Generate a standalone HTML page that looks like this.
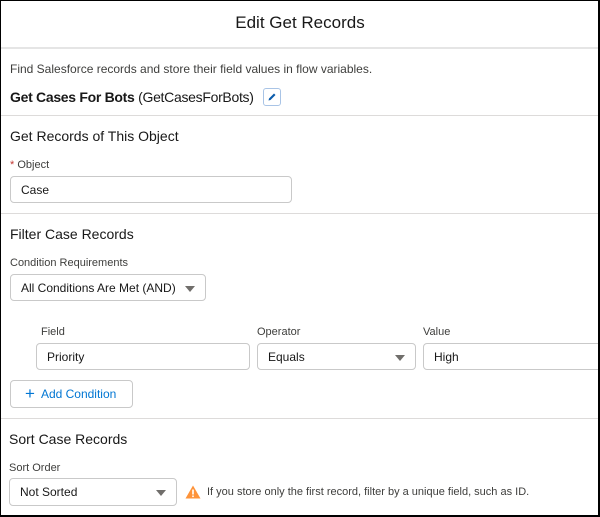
<!DOCTYPE html>
<html><head><style>
*{box-sizing:border-box;margin:0;padding:0}
body{width:600px;height:517px;overflow:hidden;background:#fff;font-family:"Liberation Sans",sans-serif;color:#181818;position:relative}
.frame{position:absolute;left:0;top:0;width:600px;height:517px;border:1px solid #000;border-right:2px solid #000;border-bottom:2px solid #000;pointer-events:none}
.a{position:absolute;white-space:nowrap}
.hr{position:absolute;left:1px;right:0;height:1px;background:#dddbda}
.in{position:absolute;border:1px solid #c9c9c9;border-radius:4px;background:#fff;font-size:12px;padding-left:10px;display:flex;align-items:center}
.lbl{font-size:11px;color:#3e3e3c}
.h{font-size:14px;color:#181818}
.caret{position:absolute;right:10px;top:11px;width:0;height:0;border-left:5px solid transparent;border-right:5px solid transparent;border-top:6px solid #706e6b}
</style></head><body>
<div class="a" style="left:0;width:600px;text-align:center;top:13px;font-size:17px">Edit Get Records</div>
<div class="hr" style="top:47px;height:2px;background:#e5e5e5"></div>
<div class="a" style="left:10px;top:62px;font-size:12px;color:#3e3e3c">Find Salesforce records and store their field values in flow variables.</div>
<div class="a" style="left:10px;top:89px;font-size:14px;letter-spacing:-0.3px"><b>Get Cases For Bots</b> (GetCasesForBots)</div>
<div class="a" style="left:263px;top:88px;width:18px;height:18px;border:1px solid #a9c4e6;border-radius:3px">
<svg width="16" height="16" viewBox="0 0 16 16" style="position:absolute;left:0;top:0"><path d="M4.5 11.5 L5 9.5 L10 4.5 L11.5 6 L6.5 11 Z" fill="#0b5cab"/></svg></div>
<div class="hr" style="top:115px"></div>
<div class="a h" style="left:10px;top:128px">Get Records of This Object</div>
<div class="a lbl" style="left:10px;top:159px"><span style="color:#c23934">*</span> Object</div>
<div class="in" style="left:10px;top:176px;width:282px;height:27px">Case</div>
<div class="hr" style="top:213px"></div>
<div class="a h" style="left:10px;top:226px">Filter Case Records</div>
<div class="a lbl" style="left:10px;top:257px">Condition Requirements</div>
<div class="in" style="left:10px;top:274px;width:196px;height:27px">All Conditions Are Met (AND)<span class="caret"></span></div>
<div class="a lbl" style="left:41px;top:326px">Field</div>
<div class="a lbl" style="left:257px;top:326px">Operator</div>
<div class="a lbl" style="left:423px;top:326px">Value</div>
<div class="in" style="left:36px;top:343px;width:214px;height:27px">Priority</div>
<div class="in" style="left:257px;top:343px;width:159px;height:27px">Equals<span class="caret"></span></div>
<div class="in" style="left:423px;top:343px;width:190px;height:27px">High</div>
<div class="in" style="left:10px;top:380px;width:123px;height:28px;padding-left:14px;color:#0176d3;font-size:12px"><span style="font-size:17px;margin-right:6px;font-weight:300">+</span>Add Condition</div>
<div class="hr" style="top:418px"></div>
<div class="a h" style="left:9px;top:431px">Sort Case Records</div>
<div class="a lbl" style="left:9px;top:462px">Sort Order</div>
<div class="in" style="left:9px;top:478px;width:168px;height:28px">Not Sorted<span class="caret"></span></div>
<svg class="a" style="left:185px;top:485px" width="16" height="14" viewBox="0 0 16 14"><path d="M8 0.5 L15.5 13.5 L0.5 13.5 Z" fill="#fe9339"/><rect x="7.2" y="4.5" width="1.6" height="5" fill="#fff"/><rect x="7.2" y="10.5" width="1.6" height="1.6" fill="#fff"/></svg>
<div class="a" style="left:207px;top:486px;font-size:11px;color:#3e3e3c">If you store only the first record, filter by a unique field, such as ID.</div>
<div class="frame"></div>
</body></html>
